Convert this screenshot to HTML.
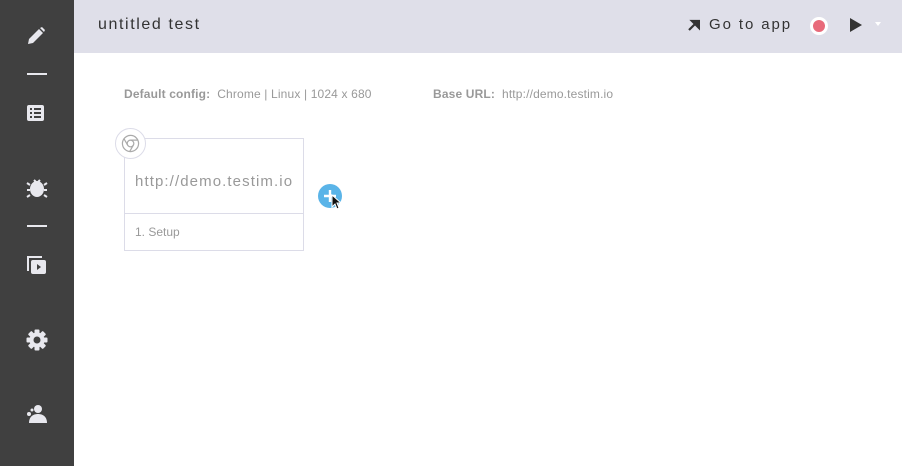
<!DOCTYPE html>
<html><head><meta charset="utf-8"><style>
*{margin:0;padding:0;box-sizing:border-box}
body{width:902px;height:466px;overflow:hidden;background:#fff;font-family:"Liberation Sans",sans-serif;position:relative}
.side{position:absolute;left:0;top:0;width:74px;height:466px;background:#404040}
.ic{position:absolute;left:26px}
.bar{position:absolute;left:27px;width:20px;height:2px;background:#e8e8ee}
.top{position:absolute;left:74px;top:0;width:828px;height:53px;background:#dfdfe9}
.title{position:absolute;left:24px;top:16px;font-size:16px;color:#333;letter-spacing:1.6px}
.go{position:absolute;left:635px;top:16px;font-size:15px;color:#333;letter-spacing:1.9px}
.cfg{position:absolute;top:87px;font-size:12px;color:#999;letter-spacing:.15px}
.cfg b{color:#999;font-weight:bold}
.card{position:absolute;left:124px;top:138px;width:180px;height:113px;border:1px solid #dcdce8}
.url{position:absolute;left:10px;top:34px;font-size:15px;color:#999;letter-spacing:1.1px}
.sep{position:absolute;left:0;top:74px;width:178px;height:1px;background:#dcdce8}
.step{position:absolute;left:10px;top:86px;font-size:12px;color:#999}
</style></head><body>
<div class="side">
<svg class="ic" style="top:26px" width="20" height="20" viewBox="0 0 20 20"><path d="M2 18l1-5L13 3l4 4L7 17z M14 2l2-1 3 3-1 2z" fill="#e8e8ee"/></svg>
<div class="bar" style="top:73px"></div>
<svg class="ic" style="top:104px" width="20" height="18" viewBox="0 0 20 18"><rect x="1" y="1" width="17" height="16" rx="2" fill="#e8e8ee"/><g fill="#404040"><rect x="4" y="4" width="2" height="2"/><rect x="8" y="4" width="7" height="2"/><rect x="4" y="8" width="2" height="2"/><rect x="8" y="8" width="7" height="2"/><rect x="4" y="12" width="2" height="2"/><rect x="8" y="12" width="7" height="2"/></g></svg>
<svg class="ic" style="top:177px" width="22" height="22" viewBox="0 0 22 22"><ellipse cx="11" cy="12" rx="7" ry="8" fill="#e8e8ee"/><path d="M4 8l-3-2M18 8l3-2M4 13H1M18 13h3M4 18l-3 2M18 18l3 2M8 3l2 2M14 3l-2 2" stroke="#e8e8ee" stroke-width="2"/></svg>
<div class="bar" style="top:225px"></div>
<svg class="ic" style="top:255px" width="22" height="20" viewBox="0 0 22 20"><path d="M2 16V2h14" stroke="#e8e8ee" stroke-width="2" fill="none"/><rect x="5" y="5" width="15" height="14" rx="2" fill="#e8e8ee"/><path d="M11 9l4 3-4 3z" fill="#404040"/></svg>
<svg class="ic" style="top:329px" width="22" height="22" viewBox="0 0 22 22"><g fill="#e8e8ee"><circle cx="11" cy="11" r="7.5"/><g transform="translate(11 11)"><rect x="-2.5" y="-10.5" width="5" height="21" rx="1"/><rect x="-2.5" y="-10.5" width="5" height="21" rx="1" transform="rotate(45)"/><rect x="-2.5" y="-10.5" width="5" height="21" rx="1" transform="rotate(90)"/><rect x="-2.5" y="-10.5" width="5" height="21" rx="1" transform="rotate(135)"/></g></g><circle cx="11" cy="11" r="3.5" fill="#404040"/></svg>
<svg class="ic" style="top:404px" width="22" height="20" viewBox="0 0 22 20"><g fill="#e8e8ee"><circle cx="12" cy="5" r="4"/><path d="M3 19c0-7 5-9 9-9s9 2 9 9z"/><circle cx="3" cy="10" r="2"/><circle cx="6" cy="6" r="1.5"/></g></svg>
</div>
<div class="top">
<div class="title">untitled test</div>
<svg style="position:absolute;left:614px;top:19px" width="12" height="12" viewBox="0 0 12 12"><path d="M1 11L9 3M4 2h7v7z" stroke="#333" stroke-width="2.2" fill="#333"/></svg>
<div class="go">Go to app</div>
<div style="position:absolute;left:736px;top:17px;width:18px;height:18px;border-radius:50%;background:#fff"></div>
<div style="position:absolute;left:739px;top:20px;width:12px;height:12px;border-radius:50%;background:#e86a7a"></div>
<svg style="position:absolute;left:776px;top:18px" width="12" height="14" viewBox="0 0 12 14"><path d="M0 0l12 7-12 7z" fill="#333"/></svg>
<svg style="position:absolute;left:801px;top:22px" width="6" height="4" viewBox="0 0 6 4"><path d="M0 0h6L3 4z" fill="#fff"/></svg>
</div>
<div class="cfg" style="left:124px"><b>Default config:</b>&nbsp; Chrome | Linux | 1024 x 680</div>
<div class="cfg" style="left:433px"><b>Base URL:</b>&nbsp; http://demo.testim.io</div>
<div class="card"><div class="url">http://demo.testim.io</div><div class="sep"></div><div class="step">1. Setup</div></div>
<div style="position:absolute;left:115px;top:128px;width:31px;height:31px;border-radius:50%;background:#fff;border:1px solid #dcdce8"></div>
<svg style="position:absolute;left:121px;top:134px" width="19" height="19" viewBox="0 0 20 20"><g fill="none" stroke="#aaa" stroke-width="1.3"><circle cx="10" cy="10" r="8.5"/><circle cx="10" cy="10" r="3.5"/><path d="M10 6.5h8M7 11.7L3 4.8M13 11.7l-4 7"/></g></svg>
<div style="position:absolute;left:318px;top:184px;width:24px;height:24px;border-radius:50%;background:#5ab4e8"></div>
<svg style="position:absolute;left:318px;top:184px" width="24" height="24"><path d="M12 6v12M6 12h12" stroke="#fff" stroke-width="2.4"/></svg>
<svg style="position:absolute;left:331px;top:194px" width="11" height="16" viewBox="0 0 11 16"><path d="M1 1v12l3-3 2 5 2-1-2-5h4z" fill="#111" stroke="#fff" stroke-width="1"/></svg>
</body></html>
